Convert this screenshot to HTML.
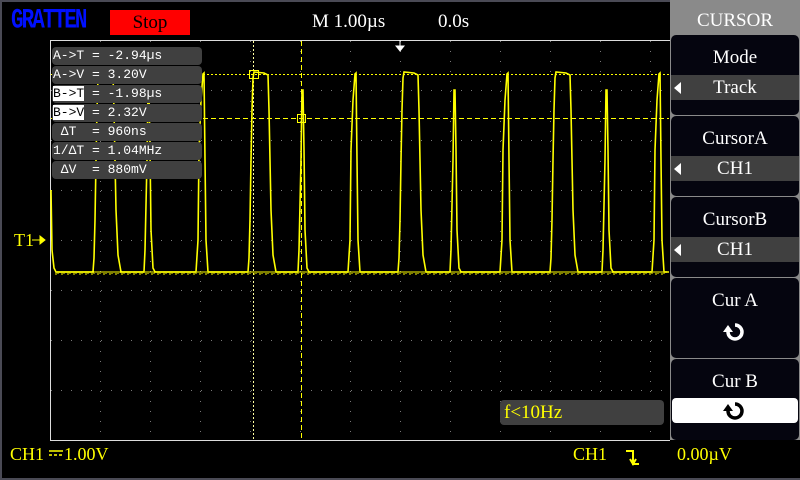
<!DOCTYPE html>
<html><head><meta charset="utf-8"><style>
*{margin:0;padding:0;box-sizing:border-box}
body{width:800px;height:480px;background:#000;overflow:hidden;position:relative;font-family:"Liberation Serif",serif}
.a{position:absolute}
.frame{left:0;top:0;width:800px;height:480px;border:2px solid #4a4a55;border-right:none}
.info{left:52px;width:150px;height:18px;background:#404040;border-radius:4px;color:#fff;font:13px/18px "Liberation Mono",monospace;padding-left:1px;white-space:pre}
.hl{background:#fff;color:#000}
.rp{left:670px;width:130px;background:#8a8a8a}
.pan{left:671px;width:128px;background:#05050f;border-radius:5px;color:#fff;text-align:center;font-size:19px}
.band{position:absolute;left:0;width:128px;height:25px;background:#404040;line-height:25px}
.tri{position:absolute;left:3px;top:7px;width:0;height:0;border-top:6px solid transparent;border-bottom:6px solid transparent;border-right:7px solid #fff}
.y{color:#ff0;font-size:18px}
</style></head><body>
<div class="a frame"></div>
<div class="a" style="left:11px;top:5px;color:#0010ff;font:bold 22px/26px 'Liberation Mono',monospace;letter-spacing:-2px;transform:scale(0.95,1.25);transform-origin:left top">GRATTEN</div>
<div class="a" style="left:110px;top:10px;width:80px;height:25px;background:#f00;color:#000;font-size:19px;line-height:25px;text-align:center">Stop</div>
<div class="a" style="left:312px;top:11px;color:#fff;font-size:19px">M 1.00µs</div>
<div class="a" style="left:438px;top:11px;color:#fff;font-size:19px">0.0s</div>

<svg class="a" style="left:0;top:0" width="670" height="480">
<g id="grid" stroke="#777" stroke-width="1"></g>
<rect x="50.5" y="40.5" width="640" height="400" fill="none" stroke="#ddd"/>
<path d="M400 40V50M396 46L400 51L404 46Z" stroke="#fff" fill="#fff"/>
<line x1="253.5" y1="41" x2="253.5" y2="440" stroke="#ffffa0" stroke-dasharray="2 2"/>
<line x1="301.5" y1="41" x2="301.5" y2="440" stroke="#ff0" stroke-dasharray="5 3"/>
<line x1="51" y1="74.5" x2="669" y2="74.5" stroke="#ff0" stroke-dasharray="2 2"/>
<line x1="51" y1="118.5" x2="669" y2="118.5" stroke="#ff0" stroke-dasharray="5 3"/>
<path id="wave" fill="none" stroke="#ff0" stroke-width="1.6"></path>
<path id="noise" fill="none" stroke="#ff0" stroke-width="1"></path>
<rect x="249.5" y="70.5" width="9" height="8" fill="none" stroke="#ff0"/>
<rect x="297.5" y="114.5" width="8" height="8" fill="none" stroke="#ff0"/>
<path d="M32 240H44M40 236L45 240L40 244Z" stroke="#ff0" fill="#ff0"/>
<path d="M626 451H633V464H639M630 459L633 464L636 459" stroke="#ff0" stroke-width="2" fill="none"/>
<path d="M49 451H63M49 455H52M54 455H57M59 455H62" stroke="#ff0" stroke-width="1.5"/>
</svg>
<div class="a y" style="left:14px;top:230px">T1</div>

<div class="a info" style="top:47px">A-&gt;T = -2.94µs</div>
<div class="a info" style="top:66px">A-&gt;V = 3.20V</div>
<div class="a info" style="top:85px"><span class="hl">B-&gt;T</span> = -1.98µs</div>
<div class="a info" style="top:104px"><span class="hl">B-&gt;V</span> = 2.32V</div>
<div class="a info" style="top:123px"> ΔT  = 960ns</div>
<div class="a info" style="top:142px">1/ΔT = 1.04MHz</div>
<div class="a info" style="top:161px"> ΔV  = 880mV</div>

<div class="a" style="left:500px;top:400px;width:164px;height:25px;background:#404040;border-radius:4px;color:#ff0;font-size:19px;line-height:25px;padding-left:4px">f&lt;10Hz</div>

<div class="a rp" style="top:0;height:440px"></div>
<div class="a" style="left:670px;top:10px;width:130px;text-align:center;color:#fff;font-size:19px">CURSOR</div>
<div class="a pan" style="top:35px;height:80px"><div style="margin-top:12px">Mode</div><div class="band" style="top:40px"><i class="tri"></i>Track</div></div>
<div class="a pan" style="top:116px;height:80px"><div style="margin-top:12px">CursorA</div><div class="band" style="top:40px"><i class="tri"></i>CH1</div></div>
<div class="a pan" style="top:197px;height:80px"><div style="margin-top:12px">CursorB</div><div class="band" style="top:40px"><i class="tri"></i>CH1</div></div>
<div class="a pan" style="top:278px;height:80px"><div style="margin-top:12px">Cur A</div>
<svg style="position:absolute;left:52px;top:42px" width="24" height="24"><path d="M12 5A7 7 0 1 1 5 12" fill="none" stroke="#fff" stroke-width="3.5"/><path d="M0 12L10 12L5 5Z" fill="#fff"/></svg></div>
<div class="a pan" style="top:359px;height:81px"><div style="margin-top:12px">Cur B</div>
<div class="band" style="top:39px;background:#fff;border-radius:4px;left:1px;width:126px"><svg style="position:absolute;left:51px;top:1px" width="24" height="24"><path d="M12 5A7 7 0 1 1 5 12" fill="none" stroke="#000" stroke-width="3.5"/><path d="M0 12L10 12L5 5Z" fill="#000"/></svg></div></div>

<div class="a y" style="left:10px;top:444px">CH1</div>
<div class="a y" style="left:64px;top:444px">1.00V</div>
<div class="a y" style="left:573px;top:444px">CH1</div>
<div class="a y" style="left:677px;top:444px">0.00µV</div>

<script>
var g=document.getElementById('grid'),s='';
for(var x=100;x<670;x+=50)s+='<line x1="'+(x+.5)+'" y1="41" x2="'+(x+.5)+'" y2="440" stroke-dasharray="1 9"/>';
for(var y=90;y<440;y+=50)s+='<line x1="51" y1="'+(y+.5)+'" x2="670" y2="'+(y+.5)+'" stroke-dasharray="1 9"/>';
g.innerHTML=s;
var W=[[-2,272],[-1,258],[0,220],[1,160],[2,110],[3,78],[4,72],[14,73],[18,75],[19,110],[20,160],[21,210],[23,255],[26,272]];
var S=[[-2,272],[-1,250],[1,160],[2,90],[3,90],[4,150],[5,230],[7,268],[9,272]];
var M=[[-2,272],[0,240],[1,150],[3,100],[5,74],[6,73],[7,160],[8,240],[10,272]];
var d='M51 190L52 250L54 268L56 272',pulses=[[95,W],[146,S],[198,M],[250,W],[300,S],[350,M],[400,W],[452,S],[502,M],[552,W],[604,S],[654,M]];
pulses.forEach(function(p){p[1].forEach(function(q){var x=p[0]+q[0];if(x<669)d+='L'+x+' '+q[1];});});
d+='L669 272';
document.getElementById('wave').setAttribute('d',d);
var n='';for(var x=56;x<668;x+=2){n+='M'+x+' 271V'+(273+(x*7%3));}
document.getElementById('noise').setAttribute('d',n);
</script>
</body></html>
